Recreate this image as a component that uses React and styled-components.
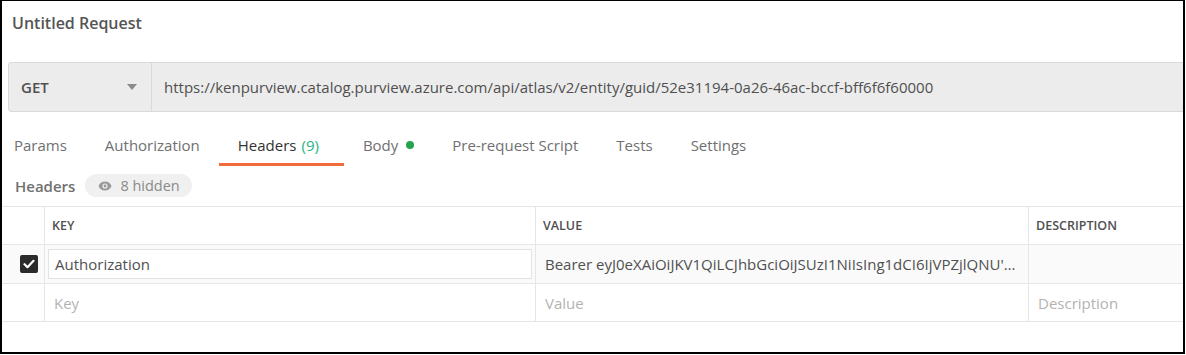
import React from "react";
import styled, { createGlobalStyle } from "styled-components";

const GlobalStyle = createGlobalStyle`
  html, body {
    margin: 0;
    padding: 0;
    background: #ffffff;
  }
  body {
    font-family: "Open Sans", "Noto Sans", sans-serif;
    color: #505050;
  }
`;

const tabs = [
  { label: "Params" },
  { label: "Authorization" },
  { label: "Headers", count: "(9)", active: true },
  { label: "Body", dot: true },
  { label: "Pre-request Script" },
  { label: "Tests" },
  { label: "Settings" },
];

// value column shows the token cut short
const token =
  "Bearer eyJ0eXAiOiJKV1QiLCJhbGciOiJSUzI1NiIsIng1dCI6IjVPZjlQNU'\u2026";

const Caret = () => (
  <svg width="10" height="6" viewBox="0 0 10 6">
    <path d="M0 0h10L5 6z" fill="#8a8a8a" />
  </svg>
);

const EyeIcon = () => (
  <svg width="14" height="10" viewBox="0 0 14 10">
    <path
      d="M7 0.5C3.8 0.5 1.4 2.6 0.5 5c0.9 2.4 3.3 4.5 6.5 4.5s5.6-2.1 6.5-4.5C12.6 2.6 10.2 0.5 7 0.5z"
      fill="#999"
    />
    <circle cx="7" cy="5" r="2.6" fill="#f0f0f0" />
    <circle cx="7" cy="5" r="1.4" fill="#999" />
  </svg>
);

const CheckIcon = () => (
  <svg width="12" height="10" viewBox="0 0 12 10">
    <path
      d="M1.5 5.2l3 3L10.5 1.8"
      stroke="#fff"
      strokeWidth="2.2"
      fill="none"
      strokeLinecap="round"
      strokeLinejoin="round"
    />
  </svg>
);

const App = () => {
  return (
    <>
      <GlobalStyle />
      <Frame>
        <Title>Untitled Request</Title>

        <UrlBar>
          <Method>
            <span>GET</span>
            <Caret />
          </Method>
          <UrlText>
            https://kenpurview.catalog.purview.azure.com/api/atlas/v2/entity/guid/52e31194-0a26-46ac-bccf-bff6f6f60000
          </UrlText>
        </UrlBar>

        <TabList>
          {tabs.map((t) => (
            <Tab key={t.label} active={t.active}>
              {t.label}
              {t.count && <Count>{t.count}</Count>}
              {t.dot && <Dot />}
            </Tab>
          ))}
        </TabList>

        <HeadersBar>
          <SectionLabel>Headers</SectionLabel>
          <HiddenPill>
            <EyeIcon />
            8 hidden
          </HiddenPill>
        </HeadersBar>

        <Table>
          <Row height={38}>
            <CheckCell />
            <HeadCell>Key</HeadCell>
            <HeadCell>Value</HeadCell>
            <HeadCell>Description</HeadCell>
          </Row>
          <Row height={39} filled>
            <CheckCell>
              <Checkbox>
                <CheckIcon />
              </Checkbox>
            </CheckCell>
            <Cell inset>
              <KeyInput>Authorization</KeyInput>
            </Cell>
            <Cell>
              <CellText>{token}</CellText>
            </Cell>
            <Cell />
          </Row>
          <Row height={38}>
            <CheckCell />
            <Cell>
              <CellText placeholder>Key</CellText>
            </Cell>
            <Cell>
              <CellText placeholder>Value</CellText>
            </Cell>
            <Cell>
              <CellText placeholder>Description</CellText>
            </Cell>
          </Row>
        </Table>
      </Frame>
    </>
  );
};

const Frame = styled.div`
  box-sizing: border-box;
  width: 1185px;
  height: 354px;
  border-style: solid;
  border-color: #000;
  border-width: 1px 2px 2px 2px;
  overflow: hidden;
  background: #fff;
`;

const Title = styled.div`
  height: 61px;
  box-sizing: border-box;
  padding: 11px 0 0 10px;
  font-size: 16px;
  font-weight: 600;
  line-height: 22px;
  color: #555;
`;

const UrlBar = styled.div`
  display: flex;
  align-items: stretch;
  height: 50px;
  box-sizing: border-box;
  margin-left: 6px;
  width: 1200px;
  background: #ececec;
  border: 1px solid #d9d9d9;
  border-radius: 3px;
`;

const Method = styled.div`
  display: flex;
  align-items: center;
  justify-content: space-between;
  width: 143px;
  box-sizing: border-box;
  padding: 0 14px 0 12px;
  border-right: 1px solid #d9d9d9;
  font-size: 15px;
  font-weight: 600;
  color: #505050;
`;

const UrlText = styled.div`
  display: flex;
  align-items: center;
  padding-left: 12px;
  font-size: 15px;
  color: #505050;
  white-space: nowrap;
`;

const TabList = styled.div`
  display: flex;
  margin-top: 15px;
  height: 39px;
`;

const Tab = styled.div`
  display: flex;
  align-items: center;
  box-sizing: border-box;
  height: 39px;
  padding: 0 19px 1px;
  font-size: 15px;
  color: ${(p) => (p.active ? "#333" : "#707070")};
  border-bottom: 3px solid ${(p) => (p.active ? "#f26b3a" : "transparent")};

  &:first-child {
    padding-left: 12px;
  }
`;

const Count = styled.span`
  margin: 0 6px 0 5px;
  color: #26b47f;
`;

const Dot = styled.span`
  width: 8px;
  height: 8px;
  margin-left: 8px;
  border-radius: 50%;
  background: #26a34f;
`;

const HeadersBar = styled.div`
  display: flex;
  align-items: center;
  gap: 10px;
  height: 40px;
  padding: 0 0 1px 13px;
  box-sizing: border-box;
`;

const SectionLabel = styled.span`
  font-size: 15px;
  font-weight: 600;
  color: #707070;
`;

const HiddenPill = styled.span`
  display: flex;
  align-items: center;
  gap: 8px;
  height: 23px;
  padding: 0 12px 0 13px;
  border-radius: 12px;
  background: #f0f0f0;
  font-size: 14.5px;
  color: #8a8a8a;
`;

const Table = styled.div`
  border-top: 1px solid #e6e6e6;
`;

const Row = styled.div`
  display: grid;
  grid-template-columns: 43px 491px 493px 1fr;
  box-sizing: border-box;
  height: ${(p) => p.height}px;
  border-bottom: 1px solid #e6e6e6;
  background: ${(p) => (p.filled ? "#fafafa" : "#fff")};
`;

const CheckCell = styled.div`
  display: flex;
  align-items: center;
  padding-left: 18px;
  border-right: 1px solid #e6e6e6;
`;

const Cell = styled.div`
  display: flex;
  align-items: center;
  min-width: 0;
  box-sizing: border-box;
  padding: ${(p) => (p.inset ? "0 3px 0 3px" : "0 6px 0 9px")};
  border-right: 1px solid #e6e6e6;

  &:last-child {
    border-right: none;
  }
`;

const HeadCell = styled(Cell)`
  padding-left: 7px;
  font-size: 12.5px;
  font-weight: 600;
  text-transform: uppercase;
  color: #505050;
`;

const Checkbox = styled.span`
  display: flex;
  align-items: center;
  justify-content: center;
  width: 18px;
  height: 18px;
  border-radius: 2px;
  background: #2b2b2b;
`;

const KeyInput = styled.div`
  display: flex;
  align-items: center;
  width: 100%;
  height: 30px;
  box-sizing: border-box;
  padding-left: 6px;
  background: #fff;
  border: 1px solid #e3e3e3;
  font-size: 15px;
  color: #505050;
`;

const CellText = styled.div`
  font-size: 15px;
  color: ${(p) => (p.placeholder ? "#b3b3b3" : "#505050")};
  white-space: nowrap;
  overflow: hidden;
`;

export default App;
